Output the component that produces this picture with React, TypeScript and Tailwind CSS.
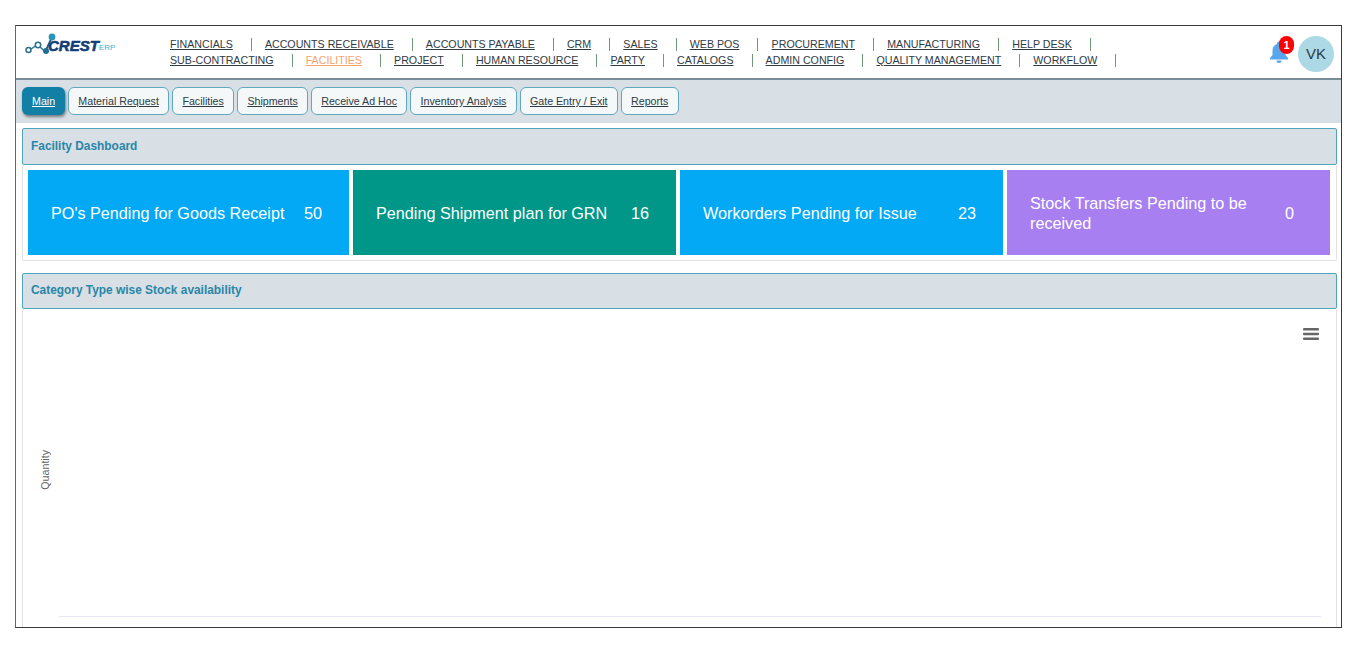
const row1 = ["FINANCIALS","ACCOUNTS RECEIVABLE","ACCOUNTS PAYABLE","CRM","SALES","WEB POS","PROCUREMENT","MANUFACTURING","HELP DESK"];
const row2 = ["SUB-CONTRACTING","FACILITIES","PROJECT","HUMAN RESOURCE","PARTY","CATALOGS","ADMIN CONFIG","QUALITY MANAGEMENT","WORKFLOW"];
const tabs = ["Main","Material Request","Facilities","Shipments","Receive Ad Hoc","Inventory Analysis","Gate Entry / Exit","Reports"];
const cards = [
  { t: "PO's Pending for Goods Receipt", n: "50", c: "bg-[#03a9f4]", w: "w-[321px]" },
  { t: "Pending Shipment plan for GRN", n: "16", c: "bg-[#009688]", w: "w-[323px]" },
  { t: "Workorders Pending for Issue", n: "23", c: "bg-[#03a9f4]", w: "w-[323px]" },
  { t: "Stock Transfers Pending to be received", n: "0", c: "bg-[#a77ff0]", w: "w-[323px]" },
];

function Logo() {
  return (
    <div className="flex items-center w-[100px] h-[26px]">
      <svg width="34" height="26" viewBox="0 0 34 26" className="shrink-0">
        <g fill="none" stroke="#2a6f92" strokeWidth="1.5">
          <circle cx="3.500" cy="18" r="2.500" />
          <path d="M6 17l4.500-3" />
          <circle cx="13" cy="13" r="2.700" />
          <path d="M15 15l4 3.500" />
        </g>
        <path d="M21 18L27 5" stroke="#1a5f85" strokeWidth="1.8" />
        <circle cx="21" cy="19" r="3" fill="#1d6d96" />
        <circle cx="27" cy="5" r="3.400" fill="#2a93b8" />
      </svg>
      <span className="font-['Liberation_Sans',sans-serif] italic font-bold text-[15px] leading-none text-[#123f78] [-webkit-text-stroke:0.6px_#123f78] -ml-[11px] mt-[1px]">CREST</span>
      <span className="font-['Liberation_Sans',sans-serif] text-[8px] leading-none text-[#35b5d8] mt-[6px]">ERP</span>
    </div>
  );
}

function Panel({ title, h }: { title: string; h: string }) {
  return (
    <div className={`${h} shrink-0 bg-[#d8dfe5] border border-[#4fa5bd] rounded-[2px] flex items-center pl-2 text-[11.9px] font-bold text-[#2a86a6]`}>
      {title}
    </div>
  );
}

function NavRow({ items }: { items: string[] }) {
  return (
    <div className="flex h-[16px] items-center">
      {items.map((s) => (
        <div key={s} className="flex items-center">
          <a className={`underline text-[10.67px] leading-[16px] whitespace-nowrap ${s === "FACILITIES" ? "text-[#f5a36c]" : "text-[#2f3b45]"}`}>{s}</a>
          <span className="ml-[18px] mr-[13.1px] w-px h-[13px] bg-[#6f9a78]" />
        </div>
      ))}
    </div>
  );
}

export default function App() {
  return (
    <div className="w-[1357px] h-[645px] bg-white pt-[25px] pl-[15px] overflow-hidden font-['Liberation_Sans',Arial,sans-serif]">
      <div className="w-[1327px] h-[603px] border border-[#3a3a3a] border-l-[#666] flex flex-col overflow-hidden">
        <header className="h-[54px] shrink-0 flex items-start border-b-2 border-[#7b8c99]">
          <div className="w-[154px] pl-[9px] pt-[6px] shrink-0"><Logo /></div>
          <nav className="pt-[10px] flex-1 flex flex-col">
            <NavRow items={row1} />
            <NavRow items={row2} />
          </nav>
          <div className="w-[72px] shrink-0 relative h-full flex justify-end pr-[7px] pt-[10px]">
            <div className="w-9 h-9 rounded-full bg-[#add8e6] flex items-center justify-center text-[15px] text-[#2b3a42]">VK</div>
            <svg viewBox="0 0 24 24" width="24" height="25" className="absolute -left-[2px] top-[13px]" fill="#5aa6ee">
              <path d="M12 2a2 2 0 0 0-2 2v.6C7 5.500 5.500 8 5.500 11v4.500L3 18.500V20h18v-1.500l-2.500-3V11c0-3-1.500-5.500-4.500-6.400V4a2 2 0 0 0-2-2z" />
              <path d="M9.500 21a2.500 2.500 0 0 0 5 0z" />
            </svg>
            <div className="absolute left-[10px] top-[10px] w-[15px] h-[18px] rounded-full bg-[#f00] text-white text-[11px] font-bold flex items-center justify-center">1</div>
          </div>
        </header>
        <div className="h-[43px] shrink-0 bg-[#d8dfe5] flex items-center gap-[3px] pl-[6px] pb-[1px]">
          {tabs.map((t, i) => (
            <a key={t} className={i === 0
              ? "h-[28px] px-[10px] flex items-center rounded-[6px] bg-[#127fa6] text-white text-[10.67px] underline shadow-[1px_2px_3px_rgba(0,0,0,0.45)]"
              : "h-[28px] px-[9.25px] flex items-center rounded-[6px] bg-[#f4f8f8] border border-[#5fa8be] text-[#2f3b45] text-[10.67px] underline whitespace-nowrap"}>{t}</a>
          ))}
        </div>
        <main className="flex-1 pl-[6px] pr-[4px] pt-[5px] min-h-0 flex flex-col">
          <Panel title="Facility Dashboard" h="h-[37px]" />
          <div className="h-[96px] shrink-0 border border-t-0 border-[#e2e2e2] rounded-b-[2px] pt-[5px] pl-[5px] flex gap-[4px] items-start">
            {cards.map((c) => (
              <div key={c.n} className={`${c.c} ${c.w} h-[85px] shrink-0 flex items-center pl-[23px] pt-[1px] text-white text-[16.2px] leading-[20px]`}>
                <div className="flex-1">{c.t}</div>
                <div className="w-[45px] shrink-0">{c.n}</div>
              </div>
            ))}
          </div>
          <div className="h-[12px] shrink-0" />
          <Panel title="Category Type wise Stock availability" h="h-[36px]" />
          <div className="relative flex-1 border-x border-[#e2e2e2]">
            <svg viewBox="0 0 16 12" width="16" height="12" className="absolute right-[17px] top-[19px]" fill="#666">
              <rect x="0" y="0" width="16" height="2.500" rx="1" />
              <rect x="0" y="4.700" width="16" height="2.500" rx="1" />
              <rect x="0" y="9.400" width="16" height="2.500" rx="1" />
            </svg>
            <div className="absolute left-[14px] top-[141px] [writing-mode:vertical-rl] rotate-180 text-[10.67px] text-[#666]">Quantity</div>
            <div className="absolute left-[36px] right-[15px] top-[307px] h-px bg-[#e6e9f5]" />
          </div>
        </main>
      </div>
    </div>
  );
}
